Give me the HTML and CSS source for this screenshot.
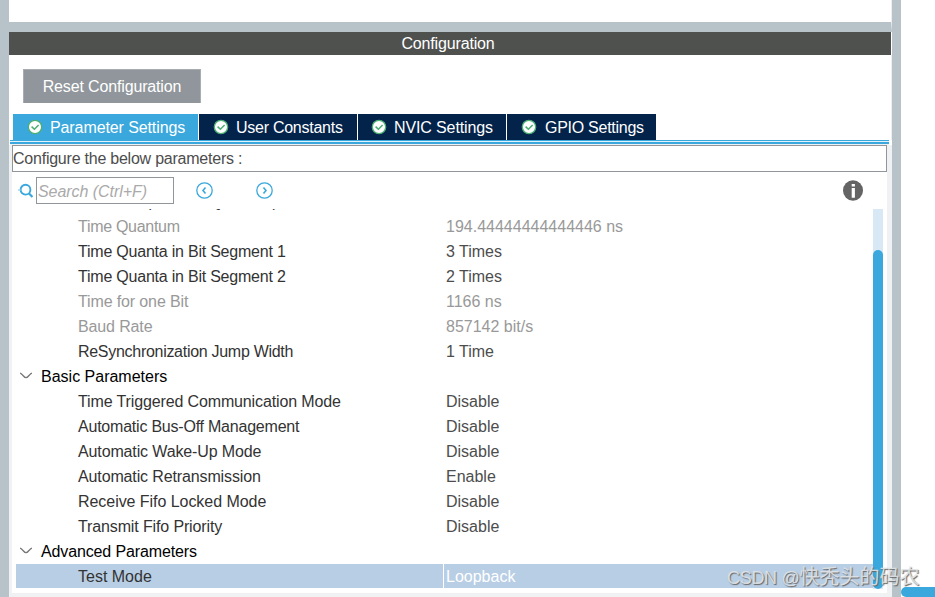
FILE: index.html
```html
<!DOCTYPE html>
<html lang="en">
<head>
<meta charset="utf-8">
<title>Configuration</title>
<link rel="stylesheet" href="styles.css">
</head>
<body>
<svg class="defs" width="0" height="0">
  <symbol id="check" viewBox="0 0 16 16">
    <circle cx="8" cy="8" r="6.7" fill="#fff" stroke="#4bae73" stroke-width="1.3"/>
    <path d="M4.6 7.6 7.4 10.3 11.6 6" fill="none" stroke="#4bae73" stroke-width="1.5"/>
  </symbol>
  <symbol id="chevron" viewBox="0 0 14 8">
    <path d="M1 1.2 Q2 1.2 4.5 4 Q7 7.2 9.5 4 Q12 1.2 13 1.2" fill="none" stroke="#777" stroke-width="1.3"/>
  </symbol>
</svg>
<div class="app">
  <main class="main">
    <div class="upper"></div>
    <h1 class="title">Configuration</h1>
    <div class="actions"><button class="reset">Reset Configuration</button></div>
    <nav class="tabs">
      <div class="tab active"><svg><use href="#check"/></svg><span>Parameter Settings</span></div>
      <div class="tab user"><svg><use href="#check"/></svg><span>User Constants</span></div>
      <div class="tab nvic"><svg><use href="#check"/></svg><span>NVIC Settings</span></div>
      <div class="tab gpio"><svg><use href="#check"/></svg><span>GPIO Settings</span></div>
    </nav>
    <div class="rule"></div>
    <section class="panel">
      <div class="hint">Configure the below parameters :</div>
      <div class="tools">
        <svg class="lens" viewBox="0 0 15 15"><circle cx="7.5" cy="6.7" r="4.9" fill="none" stroke="#3aa8dc" stroke-width="1.9"/><path d="M10.8 10.2 14.500 14" stroke="#3aa8dc" stroke-width="2.2"/><path d="M0 7h2.500" stroke="#a5d8f0" stroke-width="1.500"/></svg>
        <div class="search">Search (Ctrl+F)</div>
        <svg class="prev" viewBox="0 0 18 18"><circle cx="9.5" cy="9.5" r="7.7" fill="none" stroke="#3aa8dc" stroke-width="1.3"/><path d="M10.500 6.5 8 9.5 10.500 12.5" fill="none" stroke="#3aa8dc" stroke-width="1.6"/></svg>
        <svg class="next" viewBox="0 0 18 18"><circle cx="9.5" cy="9.5" r="7.7" fill="none" stroke="#3aa8dc" stroke-width="1.3"/><path d="M8.500 6.5 11 9.5 8.500 12.5" fill="none" stroke="#3aa8dc" stroke-width="1.6"/></svg>
        <svg class="info" viewBox="0 0 20 21"><ellipse cx="10" cy="10.5" rx="10" ry="10.3" fill="#646464"/><path d="M8.7 4h3.2v2.5H8.7zM8.7 8h3.2v9.8H8.7z" fill="#fff"/></svg>
      </div>
      <div class="body">
        <div class="list">
          <div class="row off tight"><span class="name">Prescaler (for Time Quantum)</span><span class="value"></span></div>
          <div class="row dim tighter"><span class="name">Time Quantum</span><span class="value">194.44444444444446 ns</span></div>
          <div class="row tight"><span class="name">Time Quanta in Bit Segment 1</span><span class="value">3 Times</span></div>
          <div class="row tight"><span class="name">Time Quanta in Bit Segment 2</span><span class="value">2 Times</span></div>
          <div class="row dim snug"><span class="name">Time for one Bit</span><span class="value">1166 ns</span></div>
          <div class="row dim snug"><span class="name">Baud Rate</span><span class="value">857142 bit/s</span></div>
          <div class="row tighter"><span class="name">ReSynchronization Jump Width</span><span class="value">1 Time</span></div>
          <div class="group"><svg><use href="#chevron"/></svg><span>Basic Parameters</span></div>
          <div class="row snug"><span class="name">Time Triggered Communication Mode</span><span class="value">Disable</span></div>
          <div class="row tight"><span class="name">Automatic Bus-Off Management</span><span class="value">Disable</span></div>
          <div class="row snug"><span class="name">Automatic Wake-Up Mode</span><span class="value">Disable</span></div>
          <div class="row snug"><span class="name">Automatic Retransmission</span><span class="value">Enable</span></div>
          <div class="row"><span class="name loose">Receive Fifo Locked Mode</span><span class="value">Disable</span></div>
          <div class="row snug"><span class="name">Transmit Fifo Priority</span><span class="value">Disable</span></div>
          <div class="group snug"><svg><use href="#chevron"/></svg><span>Advanced Parameters</span></div>
          <div class="row selected"><span class="name">Test Mode</span><span class="value">Loopback</span></div>
        </div>
        <div class="track"><div class="thumb"></div></div>
      </div>
    </section>
  </main>
  <aside class="side"><div class="hthumb"></div></aside>
</div>
<div class="watermark">CSDN @<span class="author">快秃头的码农</span></div>
</body>
</html>
```

FILE: styles.css
```css
* { box-sizing: border-box; }
body {
  margin: 0;
  width: 935px;
  height: 597px;
  overflow: hidden;
  position: relative;
  background: #fff;
  font: 16px/25px "Liberation Sans", Arial, sans-serif;
  color: #333;
  white-space: nowrap;
}
svg { display: block; flex: none; }
.defs { position: absolute; }
.app { display: flex; height: 597px; }
.main {
  width: 901px;
  border: solid #b8c3c9;
  border-width: 0 9px;
  display: flex;
  flex-direction: column;
}
.upper { height: 32px; flex: none; border-bottom: 10px solid #b8c3c9; border-right: 1px solid #eee; }
.title {
  margin: 0 1px 0 0;
  padding-right: 4px;
  height: 23px;
  background: #4f514f;
  color: #fff;
  font-size: 16px;
  font-weight: normal;
  line-height: 23px;
  letter-spacing: -0.15px;
  text-align: center;
}
.actions { height: 59px; padding: 14px 0 0 14px; border-right: 1px solid #eee; }
.reset {
  display: block;
  width: 178px;
  height: 34px;
  padding: 0;
  border: 1px solid #a8adb1;
  border-bottom: 0;
  background: #90969b;
  color: #fff;
  font: 16px "Liberation Sans", Arial, sans-serif;
  letter-spacing: -0.15px;
}
.tabs { display: flex; gap: 1px; height: 26px; padding-left: 4px; border-right: 1px solid #eee; }
.tab { display: flex; gap: 7px; padding: 5px 0 0 14px; width: 149px; background: #03234b; color: #fff; line-height: 18px; letter-spacing: -0.2px; }
.tab svg { width: 16px; height: 16px; }
.tab.active { width: 185px; background: #3aa8dc; letter-spacing: -0.1px; }
.tab.user { width: 158px; letter-spacing: -0.26px; }
.tab.nvic { width: 148px; padding-left: 13px; letter-spacing: -0.12px; }
.tab.gpio { gap: 8px; letter-spacing: -0.27px; }
.rule {
  height: 5px;
  margin: 0 3px 0 1px;
  border-top: 1px solid #3aa8dc;
  background: linear-gradient(#e4f3fb 1px, #3aa8dc 1px, #3aa8dc 3px, #f0f1f3 3px);
}
.panel { height: 452px; padding: 0 5px 4px 3px; background: #f0f1f3; display: flex; flex-direction: column; }
.hint { height: 27px; flex: none; border: 1px solid #90969b; background: #fff; line-height: 25px; letter-spacing: -0.23px; color: #4d4d4d; }
.tools { display: flex; height: 37px; flex: none; background: #fff; padding: 5px 24px 0 6px; }
.lens { width: 15px; height: 15px; margin-top: 6px; }
.search { width: 138px; height: 27px; margin-left: 3px; padding-left: 1px; border: 1px solid #90969b; color: #aaa; font-style: italic; line-height: 27px; letter-spacing: -0.05px; }
.prev, .next { width: 18px; height: 18px; margin: 4px 0 0 21px; overflow: visible; }
.next { margin-left: 42px; }
.info { width: 20px; height: 21px; margin: 3px 0 0 auto; }
.body { display: flex; height: 384px; background: #fff; padding: 0 4px 4px; }
.list { width: 857px; overflow: hidden; }
.row { display: flex; height: 25px; }
.row.off { margin-top: -20px; }
.name { width: 427px; padding-left: 62px; }
.off .name.name { letter-spacing: -0.4px; }
.loose { letter-spacing: -0.05px; }
.snug .name, .snug span { letter-spacing: -0.13px; }
.tight .name { letter-spacing: -0.22px; }
.tighter .name { letter-spacing: -0.29px; }
.row .value { flex: 1; margin-left: 1px; padding-left: 2px; color: #4d4d4d; letter-spacing: 0; }
.group { display: flex; height: 25px; color: #000; }
.group svg { width: 14px; height: 8px; margin: 8px 8px 0 3px; }
.selected { height: 24px; }
.selected .name, .selected .value { background: #b8cee5; }
.row.dim, .dim .value.value { color: #999; }
.selected .value.value { color: #fff; }
.track { width: 10px; height: 380px; padding-top: 41px; background: #d9e8f5; }
.thumb { height: 339px; border-radius: 5px; background: #3aa8dc; }
.side { width: 34px; display: flex; align-items: flex-end; }
.hthumb { width: 34px; height: 10px; border-radius: 5px 0 0 5px; background: #3aa8dc; }
.watermark {
  position: absolute;
  left: 727px;
  top: 564px;
  font: 18px/26px "Liberation Sans", "Noto Sans CJK SC", sans-serif;
  letter-spacing: -0.3px;
  color: rgba(225, 229, 232, 0.9);
  text-shadow: 1px 1px 1px #666;
}
.author { font-size: 20px; letter-spacing: 0; }
```
